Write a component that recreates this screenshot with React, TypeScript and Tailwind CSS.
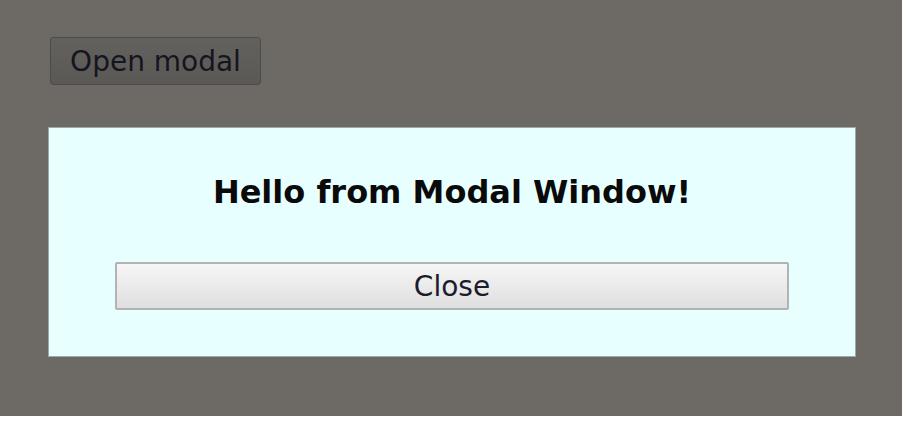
export default function App() {
  return (
    <div className="w-[902px] h-[422px] bg-white font-['DejaVu_Sans',sans-serif]">
      {/* dimmed page behind the modal */}
      <div className="h-[416px] bg-[#6d6a65] pt-[37px] pl-[48px]">
        <button className="ml-[2px] h-[48px] w-[211px] rounded-[3px] border border-[#4d4b48] bg-gradient-to-b from-[#63615e] to-[#5b5956] text-[28px] leading-[33px] text-[#151520]">
          Open modal
        </button>

        {/* Modal window */}
        <div className="mt-[42px] flex w-[808px] h-[230px] flex-col items-center border border-[#9fa8a8] bg-[#e8ffff] px-[66px] pt-[45px]">
          <h2 className="text-[32px] font-bold leading-[38px] text-[#0a0a0a]">
            Hello from Modal Window!
          </h2>
          <button className="mt-[51px] flex h-[48px] w-full items-center justify-center rounded-[2px] border-2 border-[#b3b3b3] bg-gradient-to-b from-[#f6f6f6] to-[#dfdfdf] text-[28px] leading-[33px] text-[#1c1c2c]">
            Close
          </button>
        </div>
      </div>
    </div>
  );
}
